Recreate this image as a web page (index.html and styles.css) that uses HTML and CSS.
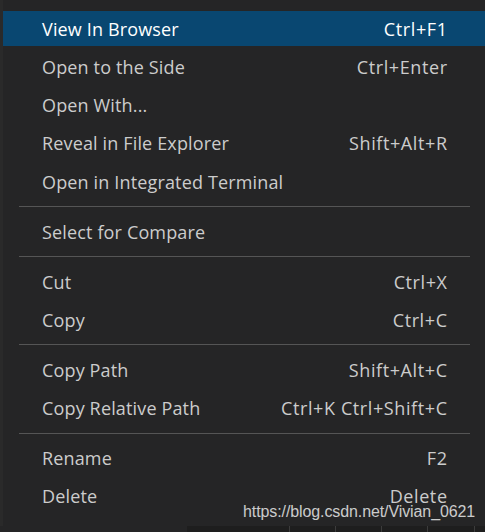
FILE: index.html
```html
<!DOCTYPE html>
<html>
<head>
<meta charset="utf-8">
<link rel="stylesheet" href="styles.css">
</head>
<body>
<div class="screen">
  <div class="edge"></div>
  <div class="menu">
    <div class="item active"><span class="label">View In Browser</span><span class="key">Ctrl+F1</span></div>
    <div class="item"><span class="label">Open to the Side</span><span class="key">Ctrl+Enter</span></div>
    <div class="item"><span class="label">Open With...</span><span class="key"></span></div>
    <div class="item"><span class="label">Reveal in File Explorer</span><span class="key">Shift+Alt+R</span></div>
    <div class="item"><span class="label">Open in Integrated Terminal</span><span class="key"></span></div>
    <div class="sep"></div>
    <div class="item"><span class="label">Select for Compare</span><span class="key"></span></div>
    <div class="sep"></div>
    <div class="item"><span class="label">Cut</span><span class="key">Ctrl+X</span></div>
    <div class="item"><span class="label">Copy</span><span class="key">Ctrl+C</span></div>
    <div class="sep"></div>
    <div class="item"><span class="label">Copy Path</span><span class="key">Shift+Alt+C</span></div>
    <div class="item"><span class="label">Copy Relative Path</span><span class="key">Ctrl+K Ctrl+Shift+C</span></div>
    <div class="sep"></div>
    <div class="item"><span class="label">Rename</span><span class="key">F2</span></div>
    <div class="item"><span class="label">Delete</span><span class="key">Delete</span></div>
  </div>
</div>
<div class="under">
  <div class="under-left"></div>
  <div class="under-right">
    <span class="cell w1"></span><span class="cell w2"></span><span class="cell w2"></span><span class="cell w2"></span><span class="cell w3"></span>
  </div>
</div>
<div class="watermark">https://blog.csdn.net/Vivian_0621</div>
</body>
</html>
```
FILE: styles.css
```css
html, body {
  margin: 0;
  padding: 0;
  background: #1e1e1e;
  width: 485px;
  height: 532px;
  overflow: hidden;
}
body {
  position: relative;
  font-family: "Open Sans", "Noto Sans", sans-serif;
}
.screen {
  display: flex;
  height: 526px;
}
.edge {
  width: 3px;
  background: #2a2a2a;
  flex: none;
}
.menu {
  flex: 1;
  display: flex;
  flex-direction: column;
  background: #252526;
  padding: 9.4px 0 0 0;
  box-sizing: border-box;
}
.item {
  display: flex;
  justify-content: space-between;
  align-items: center;
  flex: none;
  height: 35px;
  margin: 1.63px 0;
  padding: 0 38px 0 39px;
  font-size: 18px;
  color: #cccccc;
  white-space: nowrap;
}
.item.active {
  background: #094771;
  color: #ffffff;
}
.label {
  letter-spacing: 0.15px;
}
.key {
  letter-spacing: 0.6px;
  margin-right: -0.6px;
}
.sep {
  flex: none;
  height: 1px;
  background: #555555;
  margin: 5.4px 15px 5.4px 16px;
}
.under {
  display: flex;
  height: 6px;
}
.under-left {
  width: 187px;
  background: #252526;
}
.under-right {
  flex: 1;
  display: flex;
  background: #1e1e1e;
}
.cell {
  border-right: 1px solid #3c3c3c;
  box-sizing: border-box;
}
.w1 { width: 103px; }
.w2 { width: 46px; }
.w3 { width: 47px; }
.watermark {
  position: absolute;
  left: 243px;
  top: 503px;
  font-family: "Liberation Sans", Arial, sans-serif;
  font-size: 16px;
  letter-spacing: -0.1px;
  color: rgba(235, 235, 235, 0.85);
  white-space: nowrap;
}
```
